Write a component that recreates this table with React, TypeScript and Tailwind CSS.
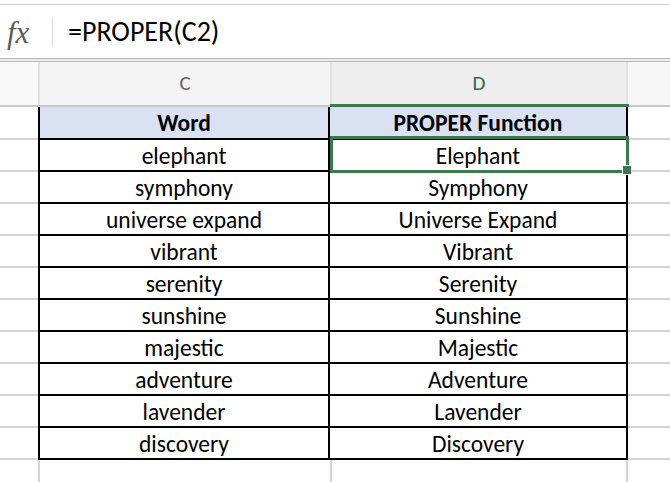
import React from "react";

const rows: [string, string][] = [
  ["elephant", "Elephant"],
  ["symphony", "Symphony"],
  ["universe expand", "Universe Expand"],
  ["vibrant", "Vibrant"],
  ["serenity", "Serenity"],
  ["sunshine", "Sunshine"],
  ["majestic", "Majestic"],
  ["adventure", "Adventure"],
  ["lavender", "Lavender"],
  ["discovery", "Discovery"],
];

function Row({ c, d, header }: { c: string; d: string; header?: boolean }) {
  return (
    <div className={header ? "flex h-[33px]" : "flex h-[32px]"}>
      <div className="w-[38px] border-b-2 border-[#d4d4d4]" />
      <div
        className={
          "flex w-[590px] border-x-2 border-b-2 border-black " +
          (header ? "bg-[#d9e1f2] font-bold" : "bg-white")
        }
      >
        <div className="flex w-[290px] items-center justify-center border-r-2 border-black pt-[3px] leading-none">
          {c}
        </div>
        <div className="flex flex-1 items-center justify-center pt-[3px] leading-none">{d}</div>
      </div>
      <div className="flex-1 border-b-2 border-[#d4d4d4]" />
    </div>
  );
}

export default function App() {
  return (
    <div
      className="relative h-[482px] w-[670px] overflow-hidden bg-white text-black"
      style={{ fontFamily: "Carlito, 'Open Sans', sans-serif" }}
    >
      {/* top strip */}
      <div className="h-[5px] border-b border-[#d2d2d2] bg-white" />
      {/* formula bar */}
      <div className="flex h-[53px] items-center bg-white">
        <div
          className="ml-[7px] mt-[2px] w-[34px] text-[31px] italic leading-none text-[#5c5c5c]"
          style={{ fontFamily: "'Liberation Serif', serif" }}
        >
          fx
        </div>
        <div className="ml-[11px] h-[30px] w-px bg-[#dcdcdc]" />
        <div className="ml-[15px] text-[28px] leading-none">=PROPER(C2)</div>
      </div>
      {/* double separator */}
      <div className="h-[4px] border-y border-[#b8b8b8] bg-[#ececec]" />
      {/* column headers */}
      <div className="flex h-[45px] border-b-2 border-[#c8c8c8] text-[21px]">
        <div className="w-[38px] bg-[#f8f8f8]" />
        <div className="w-[2px] bg-[#e2e2e2]" />
        <div className="flex w-[290px] items-center justify-center bg-[#f4f4f4] text-[#666666]">
          C
        </div>
        <div className="w-[2px] bg-[#e2e2e2]" />
        <div className="flex w-[294px] items-center justify-center bg-[#eeeeee] text-[#2f6e3e]">
          D
        </div>
        <div className="w-[2px] bg-[#e2e2e2]" />
        <div className="flex-1 bg-[#f7f7f7]" />
      </div>
      {/* table */}
      <div className="text-[23.5px]">
        <Row c="Word" d="PROPER Function" header />
        {rows.map(([c, d]) => (
          <Row key={c} c={c} d={d} />
        ))}
        <div className="flex h-[30px]">
          <div className="w-[38px]" />
          <div className="w-[2px] bg-[#d4d4d4]" />
          <div className="w-[290px]" />
          <div className="w-[2px] bg-[#d4d4d4]" />
          <div className="w-[294px]" />
          <div className="w-[2px] bg-[#d4d4d4]" />
          <div className="flex-1" />
        </div>
      </div>
      {/* green line under D header */}
      <div className="absolute left-[330px] top-[104px] h-[3px] w-[299px] bg-[#3b7a4c]" />
      {/* selected cell */}
      <div className="absolute left-[330px] top-[136px] h-[37px] w-[299px] border-[3px] border-[#3b7a4c]" />
      <div className="absolute left-[622px] top-[165px] h-[10px] w-[10px] border border-white bg-[#3b7a4c]" />
    </div>
  );
}
